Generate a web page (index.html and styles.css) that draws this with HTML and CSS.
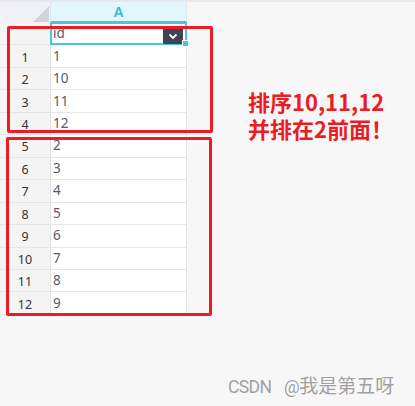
FILE: index.html
```html
<!DOCTYPE html>
<html>
<head>
<meta charset="utf-8">
<link rel="stylesheet" href="styles.css">
</head>
<body>
<div class="topbar"></div>
<div class="sheet">
  <div class="corner"><div class="tri"></div></div>
  <div class="colhead">A</div>
  <div class="rowhead"></div>
  <div class="cell idcell">id
    <div class="sel"></div>
    <div class="ddbtn"><svg width="10" height="7" viewBox="0 0 10 7"><path d="M1.5 1.5 L5 5 L8.5 1.5" fill="none" stroke="#fff" stroke-width="1.8"/></svg></div>
    <div class="handle"></div>
  </div>
  <div class="rowhead">1</div><div class="cell">1</div>
  <div class="rowhead">2</div><div class="cell">10</div>
  <div class="rowhead">3</div><div class="cell">11</div>
  <div class="rowhead">4</div><div class="cell">12</div>
  <div class="rowhead">5</div><div class="cell">2</div>
  <div class="rowhead">6</div><div class="cell">3</div>
  <div class="rowhead">7</div><div class="cell">4</div>
  <div class="rowhead">8</div><div class="cell">5</div>
  <div class="rowhead">9</div><div class="cell">6</div>
  <div class="rowhead">10</div><div class="cell">7</div>
  <div class="rowhead">11</div><div class="cell">8</div>
  <div class="rowhead">12</div><div class="cell">9</div>
</div>
<div class="box box1"></div>
<div class="box box2"></div>
<div class="note">
  <div class="line">排序10,11,12</div>
  <div class="line">并排在2前面！</div>
</div>
<div class="mark"><span class="latin">CSDN @</span>我是第五呀</div>
</body>
</html>
```
FILE: styles.css
```css
html, body {
  margin: 0;
  padding: 0;
}
body {
  width: 415px;
  height: 406px;
  background: #f7f7f7;
  position: relative;
  overflow: hidden;
  font-family: "Noto Sans", "Noto Sans CJK SC", sans-serif;
}
.topbar {
  height: 2px;
  background: #e6e8ef;
}
.sheet {
  display: grid;
  grid-template-columns: 51px 136px;
  grid-template-rows: 21px repeat(13, 22.46px);
  width: 187px;
}
.corner {
  background: #eff1f5;
  border-right: 1px solid #e2e4ea;
  position: relative;
}
.tri {
  position: absolute;
  right: 1px;
  bottom: 1px;
  width: 0;
  height: 0;
  border-left: 16px solid transparent;
  border-bottom: 16px solid #cfd3da;
}
.colhead {
  background: #e3f6fb;
  border-bottom: 2px solid #3cc6df;
  border-right: 1px solid #dfe9ee;
  color: #2cbcd8;
  font-weight: bold;
  font-size: 14px;
  text-align: center;
  line-height: 21px;
  font-family: "Liberation Sans", sans-serif;
}
.rowhead {
  background: #f4f4f4;
  border-right: 1px solid #e3e3e3;
  border-bottom: 1px solid #e6e6e6;
  color: #333;
  font-size: 12.5px;
  display: flex;
  align-items: center;
  justify-content: center;
  padding-top: 2px;
  box-sizing: border-box;
}
.cell {
  background: #fff;
  border-right: 1px solid #e3e3e3;
  border-bottom: 1px solid #e6e6e6;
  color: #575c68;
  font-size: 13.5px;
  display: flex;
  align-items: center;
  padding-left: 2px;
  padding-bottom: 1px;
  box-sizing: border-box;
}
.idcell {
  position: relative;
}
.sel {
  position: absolute;
  left: -1px;
  top: -1px;
  right: -1px;
  bottom: -1px;
  border: 2px solid #45c8e2;
}
.ddbtn {
  position: absolute;
  right: 3px;
  top: 5px;
  width: 20px;
  height: 16px;
  background: #3f4352;
  border-radius: 1px;
  display: flex;
  align-items: center;
  justify-content: center;
}
.handle {
  position: absolute;
  right: -3px;
  bottom: -3px;
  width: 5px;
  height: 5px;
  background: #45c8e2;
  border: 1px solid #fff;
}
.box {
  position: absolute;
  border: 3px solid #ec1c24;
  border-radius: 2px;
  box-sizing: border-box;
}
.box1 {
  left: 7px;
  top: 26px;
  width: 206px;
  height: 107px;
}
.box2 {
  left: 6px;
  top: 137px;
  width: 206px;
  height: 179px;
}
.note {
  position: absolute;
  left: 248px;
  top: 88px;
  color: #ec1c24;
  font-family: "Noto Sans CJK SC", sans-serif;
  font-weight: bold;
  font-size: 22px;
  white-space: nowrap;
  display: flex;
  flex-direction: column;
  gap: 1px;
}
.line {
  height: 26px;
  line-height: 26px;
}
.mark {
  position: absolute;
  left: 228px;
  top: 372px;
  color: #a0a0a0;
  font-family: "Noto Sans CJK SC", sans-serif;
  font-size: 19px;
  line-height: 26px;
  text-shadow: 0 0 1px #fff;
  white-space: nowrap;
}
.latin {
  font-family: Roboto, sans-serif;
  font-size: 17.5px;
  letter-spacing: -0.6px;
  word-spacing: 9px;
}
```
